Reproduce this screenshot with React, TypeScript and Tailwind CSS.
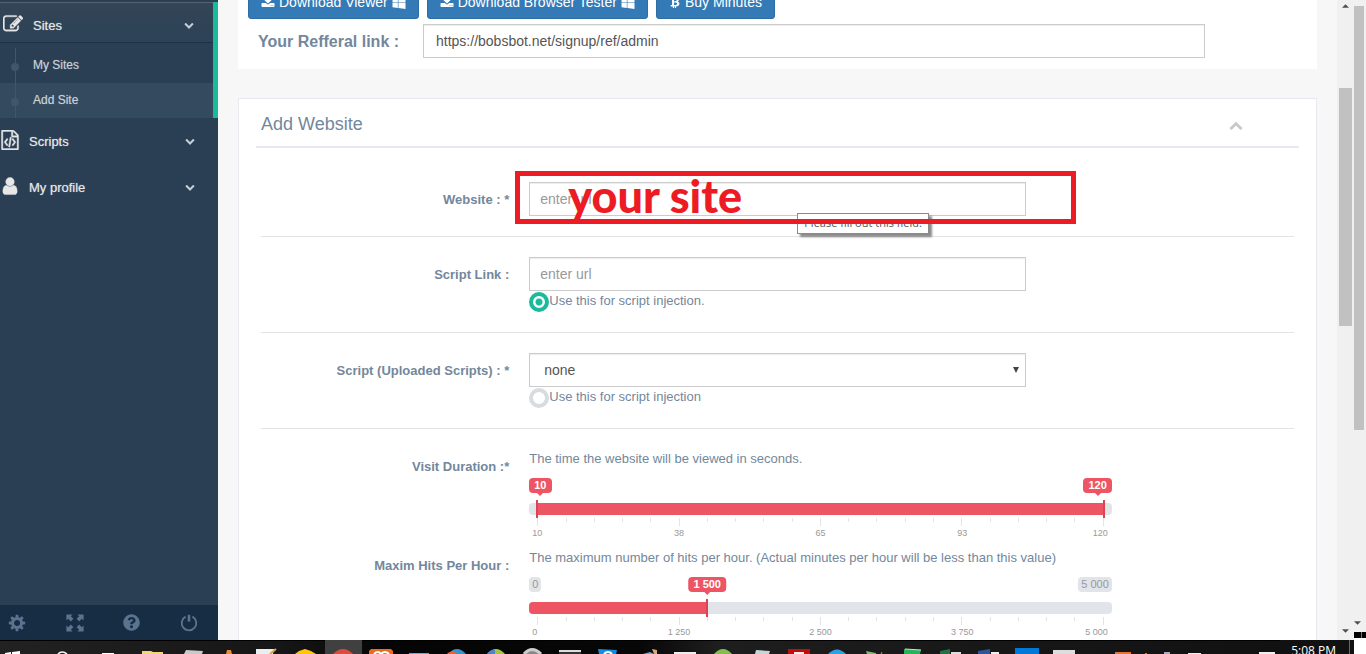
import React, { useState } from "react";
import { FaBtc, FaQuestionCircle } from "react-icons/fa";

const ICONS = {
  edit: "M888 1184l116-116-152-152-116 116v56h96v96h56zm440-720q-16-16-33 1l-350 350q-17 17-1 33t33-1l350-350q17-17 1-33zm80 594v190q0 119-84.5 203.5t-203.5 84.5h-832q-119 0-203.5-84.5t-84.5-203.5v-832q0-119 84.5-203.5t203.5-84.5h832q63 0 117 25 15 7 18 23 3 17-9 29l-49 49q-14 14-32 8-23-6-45-6h-832q-66 0-113 47t-47 113v832q0 66 47 113t113 47h832q66 0 113-47t47-113v-126q0-13 9-22l64-64q15-15 35-7t20 29zm-96-738l288 288-672 672h-288v-288zm444 132l-92 92-288-288 92-92q28-28 68-28t68 28l152 152q28 28 28 68t-28 68z",
  code: "M1596 380q28 28 48 76t20 88v1152q0 40-28 68t-68 28h-1344q-40 0-68-28t-28-68v-1600q0-40 28-68t68-28h896q40 0 88 20t76 48zm-444-244v376h376q-10-29-22-41l-313-313q-12-12-41-22zm384 1528v-1024h-416q-40 0-68-28t-28-68v-416h-768v1536h1280zm-928-896q8-11 21-12.5t24 6.5l51 38q11 8 12.5 21t-6.5 24l-182 243 182 243q8 11 6.5 24t-12.5 21l-51 38q-11 8-24 6.5t-21-12.5l-226-301q-14-19 0-38zm802 301q14 19 0 38l-226 301q-8 11-21 12.5t-24-6.5l-51-38q-11-8-12.5-21t6.5-24l182-243-182-243q-8-11-6.5-24t12.5-21l51-38q11-8 24-6.5t21 12.5zm-620 461q-13-2-20.5-13t-5.5-24l138-831q2-13 13-20.5t24-5.5l63 10q13 2 20.5 13t5.5 24l-138 831q-2 13-13 20.5t-24 5.5z",
  user: "M1536 1399q0 109-62.5 187t-150.5 78h-854q-88 0-150.5-78t-62.5-187q0-85 8.5-160.5t31.5-152 58.5-131 94-89 134.5-34.5q131 128 313 128t313-128q76 0 134.5 34.5t94 89 58.5 131 31.5 152 8.5 160.5zm-256-887q0 159-112.5 271.5t-271.5 112.5-271.5-112.5-112.5-271.5 112.5-271.5 271.5-112.5 271.5 112.5 112.5 271.5z",
  chevron: "M1683 808l-742 741q-19 19-45 19t-45-19l-742-741q-19-19-19-45.5t19-45.5l166-165q19-19 45-19t45 19l531 531 531-531q19-19 45-19t45 19l166 165q19 19 19 45.5t-19 45.5z",
  download: "M1344 1344q0-26-19-45t-45-19-45 19-19 45 19 45 45 19 45-19 19-45zm256 0q0-26-19-45t-45-19-45 19-19 45 19 45 45 19 45-19 19-45zm128-224v320q0 40-28 68t-68 28h-1472q-40 0-68-28t-28-68v-320q0-40 28-68t68-28h465l135 136q58 56 136 56t136-56l136-136h464q40 0 68 28t28 68zm-325-569q17 41-14 70l-448 448q-18 19-45 19t-45-19l-448-448q-31-29-14-70 17-39 59-39h256v-448q0-26 19-45t45-19h256q26 0 45 19t19 45v448h256q42 0 59 39z",
  windows: "M746 1006v651l-682-94v-557h682zm0-743v659h-682v-565l682-94zm982 743v786l-907-125v-661h907zm0-1006v922h-907v-797z",
};

function Icon({ name, className }: { name: keyof typeof ICONS; className: string }) {
  return (
    <svg viewBox="0 0 1792 1792" fill="currentColor" aria-hidden="true" className={className}>
      <path d={ICONS[name]} />
    </svg>
  );
}

const menuIconClass = "mb-[3px] size-[20px] stroke-current stroke-[36px]";
const menuTextClass = "flex-1 text-[13px] text-shadow-[0_0_1px_rgba(231,231,231,0.6)]";
const menuChevronClass = "mb-[2px] size-[10px] text-[#c4cfda]";

function MenuItem({ icon, label }: { icon: "code" | "user"; label: string }) {
  return (
    <li>
      <a href="#" className="flex h-[46px] items-center gap-[9px] pt-px pr-[23px] text-[#e7e7e7]">
        <Icon name={icon} className={menuIconClass} />
        <span className={menuTextClass}>{label}</span>
        <Icon name="chevron" className={menuChevronClass} />
      </a>
    </li>
  );
}

function SubItem({ label, active }: { label: string; active?: boolean }) {
  return (
    <li className={active ? "bg-[#344a5e]" : ""}>
      <a href="#" className="flex h-[35px] items-center pb-[2px] pl-[11px] text-[12px] text-[#c9d1d9]">
        <span className="mt-[4px] mr-[14px] size-[8px] rounded-full bg-[#425668]" />
        <span className="text-shadow-[0_0_1px_rgba(201,209,217,0.5)]">{label}</span>
      </a>
    </li>
  );
}

function Sidebar() {
  return (
    <nav className="flex w-[218px] shrink-0 flex-col bg-[#2a3f54]">
      <ul className="flex-1 pt-[2px]">
        <li className="border-r-[5px] border-[#1abb9c]">
          <a
            href="#"
            className="flex h-[41px] items-center gap-[10px] border-t border-b border-t-[#526373] border-b-[#1e3044] bg-linear-to-b from-[#334556] to-[#2c4257] pt-[6px] pr-[19px] pl-[3px] text-[#e7e7e7]"
          >
            <Icon name="edit" className={menuIconClass} />
            <span className={menuTextClass}>Sites</span>
            <Icon name="chevron" className={menuChevronClass} />
          </a>
          <ul className="relative pt-[5px]">
            <li aria-hidden="true" className="absolute top-[5px] bottom-0 left-[15px] w-px bg-[#425668]" />
            <SubItem label="My Sites" />
            <SubItem label="Add Site" active />
          </ul>
        </li>
        <MenuItem icon="code" label="Scripts" />
        <MenuItem icon="user" label="My profile" />
      </ul>
      <div className="flex h-[35px] items-center justify-between bg-[#172d44] pr-[20px] pl-[8px] text-[#5a738e]">
        <button aria-label="Settings">
          <svg viewBox="0 0 18 18" className="size-[18px]" aria-hidden="true">
            <circle cx="9" cy="9" r="4.5" fill="none" stroke="currentColor" strokeWidth="3" />
            {[0, 45, 90, 135, 180, 225, 270, 315].map((a) => (
              <path key={a} d="M7.3 3.8L7.8.8h2.4l.5 3z" fill="currentColor" transform={`rotate(${a} 9 9)`} />
            ))}
          </svg>
        </button>
        <button aria-label="Full screen">
          <svg viewBox="0 0 18 18" className="size-[18px]" fill="currentColor" aria-hidden="true">
            {[0, 90, 180, 270].map((a) => (
              <path key={a} d="M.4.4h6.2L4.8 2.2l2.6 2.6-2.6 2.6-2.6-2.6L.4 6.6z" transform={`rotate(${a} 9 9)`} />
            ))}
          </svg>
        </button>
        <button aria-label="Help">
          <FaQuestionCircle className="size-[17px]" />
        </button>
        <button aria-label="Log out">
          <svg viewBox="0 0 18 18" className="size-[18px]" fill="none" stroke="currentColor" aria-hidden="true">
            <path d="M5.6 2.6a7.3 7.3 0 1 0 6.8 0" strokeWidth="1.9" />
            <path d="M9 .8v6.8" strokeWidth="2.6" />
          </svg>
        </button>
      </div>
    </nav>
  );
}

const buttonClass =
  "flex h-[34px] items-center gap-[4px] rounded-[3px] border border-[#2e6da4] bg-[#337ab7] px-[12px] text-[14px] whitespace-nowrap text-white";

function Header() {
  return (
    <section className="-mt-[15px] bg-white px-[10px] pb-[11px]">
      <div className="flex gap-[8px]">
        <button className={buttonClass}>
          <Icon name="download" className="size-[14px]" />
          Download Viewer
          <Icon name="windows" className="size-[14px]" />
        </button>
        <button className={buttonClass}>
          <Icon name="download" className="size-[14px]" />
          Download Browser Tester
          <Icon name="windows" className="size-[14px]" />
        </button>
        <button className={buttonClass}>
          <FaBtc className="size-[12px]" />
          Buy Minutes
        </button>
      </div>
      <div className="mt-[5px] flex items-center pr-[102px] pl-[10px]">
        <label htmlFor="referral" className="w-[165px] shrink-0 pt-[2px] text-[16px] font-bold">
          Your Refferal link :
        </label>
        <input
          id="referral"
          readOnly
          value="https://bobsbot.net/signup/ref/admin"
          className="h-[34px] min-w-0 flex-1 border border-[#ccc] bg-white px-[12px] text-[14px] text-[#555] inset-shadow-[0_1px_1px_rgba(0,0,0,0.075)]"
        />
      </div>
    </section>
  );
}

function Field({
  label,
  id,
  wide,
  children,
}: {
  label: string;
  id: string;
  wide?: boolean;
  children: React.ReactNode;
}) {
  return (
    <div className="grid grid-cols-12">
      <label htmlFor={id} className="col-span-3 px-[10px] pt-[9px] text-right font-bold">
        {label}
      </label>
      <div className={wide ? "col-span-7 px-[10px]" : "col-span-6 px-[10px]"}>{children}</div>
    </div>
  );
}

const inputClass =
  "block h-[34px] w-full border border-[#ccc] bg-white px-[10px] text-[14px] text-[#555] placeholder-[#999] inset-shadow-[0_1px_1px_rgba(0,0,0,0.075)]";

function InjectionRadio({
  text,
  checked,
  onChange,
}: {
  text: string;
  checked: boolean;
  onChange: () => void;
}) {
  return (
    <label className="mt-px flex h-[20px]">
      <input
        type="radio"
        name="injection"
        checked={checked}
        onChange={onChange}
        className="size-[20px] shrink-0 appearance-none rounded-full border-4 border-[#d7dcde] bg-white checked:border-[#1abb9c] checked:bg-[radial-gradient(circle,#1abb9c_3px,#fff_4px)]"
      />
      <span className="leading-[18px]">{text}</span>
    </label>
  );
}

function Bubble({ text, className, style }: { text: string; className: string; style?: React.CSSProperties }) {
  return (
    <span
      style={style}
      className={
        "absolute top-[10px] h-[15px] rounded-[4px] bg-[#ed5565] px-[5px] text-[11px] leading-[15px] font-bold whitespace-nowrap text-white " +
        className
      }
    >
      {text}
      <svg viewBox="0 0 6 3" className="absolute top-full left-1/2 -ml-[3px] h-[3px] w-[6px]" aria-hidden="true">
        <path d="M0 0h6L3 3z" fill="#ed5565" />
      </svg>
    </span>
  );
}

function Handle({ percent }: { percent: number }) {
  return <span className="absolute -top-[3px] -ml-px h-[18px] w-[2px] bg-[#da4453]" style={{ left: `${percent}%` }} />;
}

function SliderScale({ labels }: { labels: string[] }) {
  const last = labels.length - 1;
  return (
    <>
      <div className="mt-[3px] flex h-[8px] justify-between px-[8px]">
        {Array.from({ length: 21 }, (_, i) => (
          <span key={i} className={i % 5 === 0 ? "h-[8px] w-px bg-[#e1e4e9]" : "h-[4px] w-px bg-[#e1e4e9]"} />
        ))}
      </div>
      <div className="relative mx-[8px] mt-px h-[12px] text-[9px] leading-[12px] whitespace-nowrap text-[#999]">
        {labels.map((text, i) =>
          i === 0 ? (
            <span key={text} className="absolute -left-[5px]">{text}</span>
          ) : i === last ? (
            <span key={text} className="absolute -right-[4px]">{text}</span>
          ) : (
            <span key={text} className="absolute -translate-x-1/2" style={{ left: `${(i / last) * 100}%` }}>
              {text}
            </span>
          )
        )}
      </div>
    </>
  );
}

const rangeClass = "absolute inset-0 m-0 h-[12px] w-full cursor-pointer opacity-0";

function DurationSlider() {
  return (
    <div className="relative h-[80px] pt-[35px]">
      <Bubble text="10" className="left-0" />
      <Bubble text="120" className="right-0" />
      <div className="relative h-[12px] rounded-[4px] bg-[#e1e4e9] px-[8px]">
        <div className="relative h-[12px] bg-[#ed5565]">
          <Handle percent={0} />
          <Handle percent={100} />
        </div>
        <input id="duration" type="range" min={10} max={120} defaultValue={10} className={rangeClass} />
        <input aria-label="Longest visit" type="range" min={10} max={120} defaultValue={120} className={rangeClass} />
      </div>
      <SliderScale labels={["10", "38", "65", "93", "120"]} />
    </div>
  );
}

function HitsSlider() {
  const [hits, setHits] = useState(1500);
  const percent = (hits / 5000) * 100;
  const edge = "absolute top-[10px] h-[15px] rounded-[4px] bg-[#e1e4e9] px-[3px] text-[11px] leading-[15px] whitespace-nowrap text-[#999] ";
  return (
    <div className="relative h-[80px] pt-[35px]">
      <span className={edge + "left-0"}>0</span>
      <span className={edge + "right-0"}>5 000</span>
      <div className="absolute inset-x-[8px] top-0">
        <Bubble
          text={String(hits).replace(/(\d)(?=\d{3}$)/, "$1 ")}
          className="-translate-x-1/2"
          style={{ left: `${percent}%` }}
        />
      </div>
      <div className="relative h-[12px] rounded-[4px] bg-[#e1e4e9] pr-[8px]">
        <div className="h-[12px] rounded-l-[4px] bg-[#ed5565] pl-[8px]">
          <div className="relative h-[12px] bg-[#ed5565]">
            <div className="absolute inset-y-0 right-0 bg-[#e1e4e9]" style={{ left: `${percent}%` }} />
            <Handle percent={percent} />
          </div>
        </div>
        <input
          id="hits"
          type="range"
          min={0}
          max={5000}
          value={hits}
          onChange={(e) => setHits(Number(e.target.value))}
          className={rangeClass}
        />
      </div>
      <SliderScale labels={["0", "1 250", "2 500", "3 750", "5 000"]} />
    </div>
  );
}

function AddWebsite() {
  const [source, setSource] = useState("link");
  const rule = "my-[20px] border-t border-[#e2e3e4]";
  return (
    <section className="mt-[29px] border border-[#e6e9ed] bg-white px-[17px] pb-[20px]">
      <div className="flex h-[49px] items-center justify-between border-b-2 border-[#e6e9ed] pt-[3px] pr-[56px] pl-[5px]">
        <h2 className="text-[18px] leading-[20px]">Add Website</h2>
        <button aria-label="Collapse" className="mt-[5px] text-[#c5c7cb]">
          <Icon name="chevron" className="size-[14px] rotate-180" />
        </button>
      </div>
      <form className="px-[5px] pt-[34px]">
        <Field label="Website : *" id="website">
          <div className="relative">
            <input id="website" type="url" placeholder="enter url" className={inputClass} />
            <div className="absolute top-[31px] left-[268px] h-[21px] border border-[#8a8a8a] bg-white px-[6px] font-['Open_Sans',sans-serif] text-[11px] leading-[18px] whitespace-nowrap text-[#575757] shadow-[3px_3px_2px_rgba(0,0,0,0.45)]">
              Please fill out this field.
            </div>
            <div className="pointer-events-none absolute -top-[11px] -right-[50px] -left-[14px] h-[53px] border-[5px] border-[#ed1c24]">
              <span className="absolute -top-[8px] left-[48px] font-['Lato',sans-serif] text-[45px] leading-[56px] font-black whitespace-nowrap text-[#ed1c24]">
                your site
              </span>
            </div>
          </div>
        </Field>
        <hr className={rule} />
        <Field label="Script Link :" id="script-link">
          <input id="script-link" type="url" placeholder="enter url" className={inputClass} />
          <InjectionRadio
            text="Use this for script injection."
            checked={source === "link"}
            onChange={() => setSource("link")}
          />
        </Field>
        <hr className={rule} />
        <Field label="Script (Uploaded Scripts) : *" id="script">
          <div className="relative">
            <select id="script" className={inputClass + " appearance-none pl-[14px]"}>
              <option>none</option>
            </select>
            <svg viewBox="0 0 6 6" className="pointer-events-none absolute top-[14px] right-[7px] size-[6px]" aria-hidden="true">
              <path d="M0 0h6L3 6z" fill="#444" />
            </svg>
          </div>
          <InjectionRadio
            text="Use this for script injection"
            checked={source === "upload"}
            onChange={() => setSource("upload")}
          />
        </Field>
        <hr className={rule} />
        <Field label="Visit Duration :*" id="duration" wide>
          <p className="pt-px">The time the website will be viewed in seconds.</p>
          <DurationSlider />
        </Field>
        <Field label="Maxim Hits Per Hour :" id="hits" wide>
          <p className="pt-px">The maximum number of hits per hour. (Actual minutes per hour will be less than this value)</p>
          <HitsSlider />
        </Field>
      </form>
    </section>
  );
}

function Taskbar() {
  return (
    <footer className="relative flex h-[14px] shrink-0 items-start justify-between overflow-hidden bg-[#111] pr-[18px]">
      <svg viewBox="0 0 1280 14" className="h-[14px] w-[1280px] shrink-0" aria-hidden="true">
        <defs>
          <linearGradient id="bar">
            <stop offset="0" stopColor="#222" />
            <stop offset=".22" stopColor="#161616" />
            <stop offset=".3" stopColor="#050505" />
            <stop offset=".5" stopColor="#070707" />
            <stop offset=".56" stopColor="#1e1e1e" />
            <stop offset="1" stopColor="#111" />
          </linearGradient>
        </defs>
        <rect width="1280" height="14" fill="url(#bar)" />
        <rect width="1280" height="1" fill="#000" />
        <path d="M5 13l6-1v2H5zM12 12l8-1v3h-8z" fill="#fff" />
        <path d="M58 14q4-4 9 0" stroke="#fff" strokeWidth="1.6" fill="none" />
        <path d="M102 13h12v1h-12z" fill="#fff" />
        <path d="M142 11h9l2 1h10v2h-21z" fill="#f4d673" />
        <path d="M186 10l17 1-1 3h-18z" fill="#c9c9c9" />
        <path d="M227 10h4l1 4h-6z" fill="#f08a2c" />
        <path d="M256 9h18l-1 5h-17z" fill="#e9eef0" />
        <path d="M276 9l-6 5" stroke="#dca446" strokeWidth="2" />
        <path d="M295 14l4-3 6-2 6 2 5 3z" fill="#ffc60a" />
        <rect x="325" width="37" height="14" fill="#404040" />
        <path d="M333 14q10-10 20 0z" fill="#dd4b3e" />
        <path d="M369 14v-3l2-2h20l2 2v3z" fill="#ee6a1d" />
        <path d="M374 14q4-4 7 0 4-4 8 0" stroke="#fff" strokeWidth="2" fill="none" />
        <path d="M409 13h20v1h-20z" fill="#58aee6" />
        <path d="M448 14q9-10 18 0z" fill="#3793c9" />
        <path d="M447 13l7-2 3 3h-9z" fill="#e9662b" />
        <path d="M487 14q9-10 18 0z" fill="#a7c43c" />
        <path d="M487 14q4-5 8-4v4z" fill="#4d86c9" />
        <path d="M524 14q8-9 17 0" stroke="#ccc" strokeWidth="3" fill="#888" />
        <path d="M559 10h22v4h-22z" fill="#333" />
        <path d="M559 11h22" stroke="#ddd" strokeWidth="2" />
        <path d="M598 9l19 1-1 4h-17z" fill="#168be0" />
        <path d="M604 14q4-4 8 0" stroke="#fff" strokeWidth="2" fill="none" />
        <path d="M643 14l7-2 4 2z" fill="#7fa3bd" />
        <path d="M652 9l5 1v4h-3z" fill="#d6a874" />
        <path d="M674 12h22v2h-22z" fill="#eee" />
        <path d="M714 14q9-10 18 0z" fill="#83bd52" />
        <path d="M756 10l14 1-1 3h-14z" fill="#c6d6d7" />
        <path d="M788 9h22v5h-22z" fill="#c10d0d" />
        <path d="M794 12h10v2h-10z" fill="#eee" />
        <path d="M828 14q9-9 18 0z" fill="#2aa3df" />
        <path d="M866 11l10 2v1h-9z" fill="#83ba72" />
        <path d="M881 14l1-2" stroke="#c8973a" />
        <path d="M904 9l17 1-1 4h-16z" fill="#29b455" />
        <path d="M905 9l16 1" stroke="#c9e8cf" />
        <path d="M940 11l10-2v5h-10z" fill="#217346" />
        <path d="M951 12h10v2h-10z" fill="#ddd" />
        <path d="M978 11l12-2v5h-12z" fill="#2b579a" />
        <path d="M991 12h8v2h-8z" fill="#eee" />
        <path d="M1015 8h24v6h-24z" fill="#0078d7" />
        <path d="M1053 10h22v4h-22z" fill="#ddd" />
        <path d="M1115 12h16v2h-16z" fill="#e67531" />
        <path d="M1145 13h2v1h-2z" fill="#e67531" />
        <path d="M1164 12h6v2h-6z" fill="#aab" />
        <path d="M1188 13h13v1h-13zM1259 12h16v2h-16z" fill="#eee" />
      </svg>
      <span className="flex-1 pt-[4px] text-right font-['Open_Sans',sans-serif] text-[12px] leading-[14px] whitespace-nowrap text-white">
        5:08 PM
      </span>
      <span className="absolute inset-y-0 right-[4px] w-px bg-[#666]" />
    </footer>
  );
}

function Arrow({ up }: { up?: boolean }) {
  return (
    <svg viewBox="0 0 8 4" className={up ? "h-[4px] w-[7px] rotate-180" : "h-[4px] w-[7px]"} aria-hidden="true">
      <path d="M0 0h8L4 4z" fill="#505050" />
    </svg>
  );
}

export default function App() {
  return (
    <div className="flex h-screen overflow-hidden bg-white font-['Liberation_Sans',Arial,sans-serif] text-[13px] leading-[18px] text-[#73879c]">
      <div className="flex min-w-0 flex-1 flex-col">
        <div className="flex min-h-0 flex-1">
          <Sidebar />
          <main className="min-w-0 flex-1 overflow-hidden bg-[#f7f7f7] px-[20px]">
            <Header />
            <AddWebsite />
          </main>
          <div className="flex w-[17px] shrink-0 flex-col items-center bg-[#f0f0f0] pt-[4px] pb-[7px]">
            <Arrow up />
            <div className="mt-[80px] h-[238px] w-[13px] bg-[#c1c1c1]" />
            <div className="flex-1" />
            <Arrow />
          </div>
        </div>
        <Taskbar />
      </div>
      <div className="flex w-[12px] shrink-0 flex-col">
        <div className="flex flex-1 flex-col bg-[#f0f0f0] pt-[6px] pb-[7px]">
          <div className="h-[424px] w-[10px] bg-[#c1c1c1]" />
          <div className="flex-1" />
          <Arrow />
        </div>
        <div className="mb-[16px] flex h-[6px] gap-px bg-[#777]">
          <div className="w-[7px] bg-black" />
          <div className="flex-1 bg-black" />
        </div>
      </div>
    </div>
  );
}
